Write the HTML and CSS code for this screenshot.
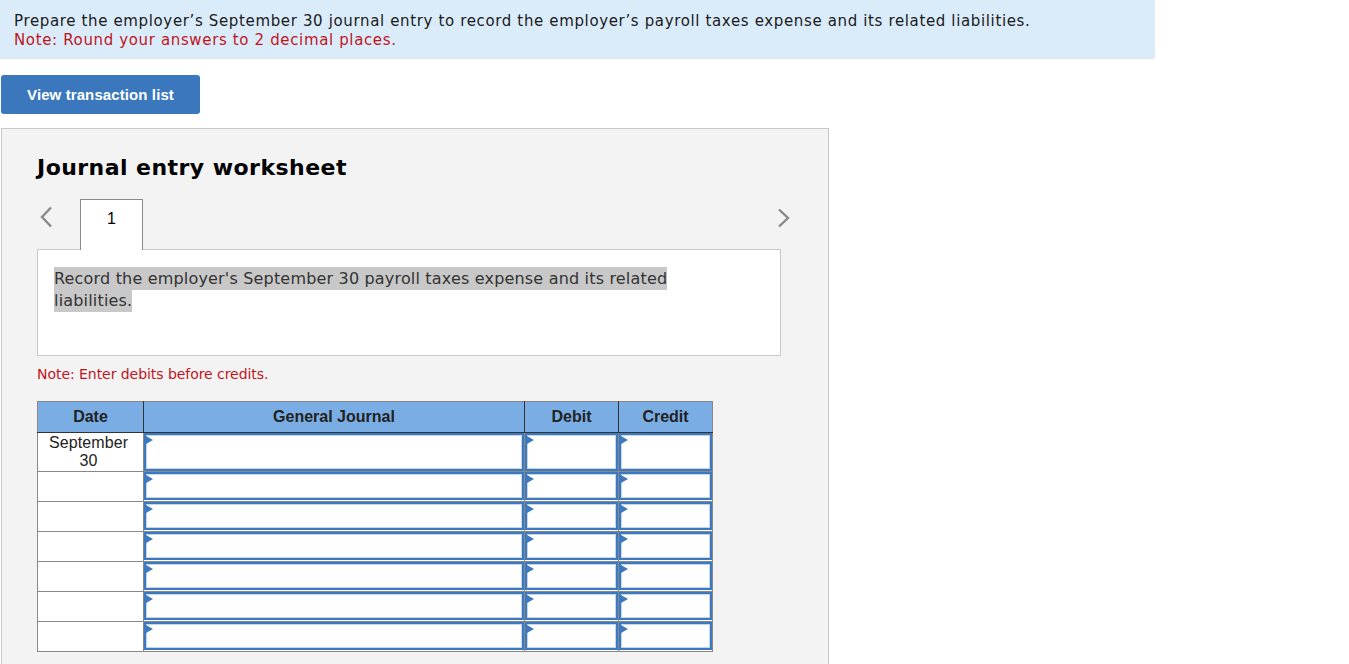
FILE: index.html
```html
<!DOCTYPE html>
<html lang="en">
<head>
<meta charset="utf-8">
<title>Journal entry worksheet</title>
<link rel="stylesheet" href="styles.css">
</head>
<body>
<div class="banner">
  <p class="banner-line">Prepare the employer’s September 30 journal entry to record the employer’s payroll taxes expense and its related liabilities.</p>
  <p class="banner-line note">Note: Round your answers to 2 decimal places.</p>
</div>

<button class="btn">View transaction list</button>

<section class="panel">
  <h2 class="panel-title">Journal entry worksheet</h2>

  <div class="tabs">
    <span class="chev chev-left">
      <svg width="14" height="22" viewBox="0 0 14 22"><polyline points="12,1.5 3,11 12,20.5" fill="none" stroke="#8a8a8a" stroke-width="2.4"/></svg>
    </span>
    <div class="tab">1</div>
    <span class="tab-spacer"></span>
    <span class="chev chev-right">
      <svg width="14" height="20" viewBox="0 0 14 20"><polyline points="2,1.5 11,10 2,18.5" fill="none" stroke="#8a8a8a" stroke-width="2.4"/></svg>
    </span>
  </div>

  <div class="desc">
    <p class="desc-text"><span class="hl">Record the employer's September 30 payroll taxes expense and its related liabilities.</span></p>
  </div>

  <p class="note small-note">Note: Enter debits before credits.</p>

  <table class="journal">
    <colgroup>
      <col class="c-date"><col class="c-gj"><col class="c-num"><col class="c-num">
    </colgroup>
    <thead>
      <tr><th>Date</th><th>General Journal</th><th>Debit</th><th>Credit</th></tr>
    </thead>
    <tbody>
      <tr class="first">
        <td class="date">September<br>30</td>
        <td class="in"><div class="field"><span class="tri"></span></div></td>
        <td class="in"><div class="field"><span class="tri"></span></div></td>
        <td class="in"><div class="field"><span class="tri"></span></div></td>
      </tr>
      <tr>
        <td class="date"></td>
        <td class="in"><div class="field"><span class="tri"></span></div></td>
        <td class="in"><div class="field"><span class="tri"></span></div></td>
        <td class="in"><div class="field"><span class="tri"></span></div></td>
      </tr>
      <tr>
        <td class="date"></td>
        <td class="in"><div class="field"><span class="tri"></span></div></td>
        <td class="in"><div class="field"><span class="tri"></span></div></td>
        <td class="in"><div class="field"><span class="tri"></span></div></td>
      </tr>
      <tr>
        <td class="date"></td>
        <td class="in"><div class="field"><span class="tri"></span></div></td>
        <td class="in"><div class="field"><span class="tri"></span></div></td>
        <td class="in"><div class="field"><span class="tri"></span></div></td>
      </tr>
      <tr>
        <td class="date"></td>
        <td class="in"><div class="field"><span class="tri"></span></div></td>
        <td class="in"><div class="field"><span class="tri"></span></div></td>
        <td class="in"><div class="field"><span class="tri"></span></div></td>
      </tr>
      <tr>
        <td class="date"></td>
        <td class="in"><div class="field"><span class="tri"></span></div></td>
        <td class="in"><div class="field"><span class="tri"></span></div></td>
        <td class="in"><div class="field"><span class="tri"></span></div></td>
      </tr>
      <tr>
        <td class="date"></td>
        <td class="in"><div class="field"><span class="tri"></span></div></td>
        <td class="in"><div class="field"><span class="tri"></span></div></td>
        <td class="in"><div class="field"><span class="tri"></span></div></td>
      </tr>
    </tbody>
  </table>
</section>
</body>
</html>
```

FILE: styles.css
```css
html, body {
  margin: 0;
  padding: 0;
  background: #ffffff;
}
body {
  font-family: "DejaVu Sans", Verdana, sans-serif;
  color: #1a1a1a;
  overflow: hidden;
  height: 664px;
}
.banner {
  width: 1155px;
  height: 59px;
  box-sizing: border-box;
  padding: 12px 14px 0 14px;
  background: #daecfa;
}
.banner-line {
  margin: 0;
  font-size: 15px;
  line-height: 19px;
  letter-spacing: 0.64px;
  white-space: nowrap;
}
.note {
  color: #c0141c;
}
.btn {
  display: block;
  margin: 16px 0 0 1px;
  width: 199px;
  height: 39px;
  border: none;
  border-radius: 3px;
  background: #3a77bd;
  color: #ffffff;
  font-family: "Liberation Sans", Arial, sans-serif;
  font-weight: bold;
  font-size: 15px;
  letter-spacing: 0.1px;
  padding: 0 0 1px 0;
}
.panel {
  margin: 14px 0 0 1px;
  width: 828px;
  height: 600px;
  box-sizing: border-box;
  border: 1px solid #c9c9c9;
  background: #f3f3f3;
  padding: 26px 0 0 35px;
}
.panel-title {
  margin: 0;
  font-size: 22px;
  line-height: 26px;
  font-weight: bold;
  letter-spacing: 0.45px;
  color: #000;
}
.tabs {
  display: flex;
  align-items: flex-start;
  margin-top: 18px;
  width: 754px;
  height: 51px;
  position: relative;
  z-index: 2;
  margin-bottom: -1px;
}
.chev {
  display: block;
  line-height: 0;
}
.chev-left {
  margin: 7px 0 0 2px;
  width: 41px;
}
.chev-right {
  margin-top: 9px;
}
.tab {
  width: 63px;
  height: 51px;
  box-sizing: border-box;
  background: #fff;
  border: 1px solid #8a8a8a;
  border-bottom: none;
  text-align: center;
  font-family: "Liberation Sans", Arial, sans-serif;
  font-size: 16px;
  line-height: 18px;
  padding-top: 10px;
  color: #000;
}
.tab-spacer {
  flex: 1;
}
.desc {
  width: 744px;
  height: 107px;
  box-sizing: border-box;
  background: #fff;
  border: 1px solid #c9c9c9;
  padding: 18px 0 0 16px;
}
.desc-text {
  margin: 0;
  width: 660px;
  font-size: 16px;
  line-height: 22px;
  letter-spacing: 0.18px;
  color: #333;
}
.hl {
  background: #c8c8c8;
  padding: 2px 0;
}
.small-note {
  margin: 10px 0 0 0;
  font-size: 14px;
  line-height: 17px;
  letter-spacing: -0.05px;
}
.journal {
  margin-top: 18px;
  border-collapse: collapse;
  table-layout: fixed;
  width: 676px;
  font-family: "Liberation Sans", Arial, sans-serif;
}
.c-date { width: 106px; }
.c-gj { width: 381px; }
.c-num { width: 94px; }
.journal th {
  height: 30px;
  padding: 0;
  background: #79ade4;
  font-size: 16px;
  font-weight: bold;
  color: #222;
  border: 1px solid #333;
  border-top-color: #888;
}
.journal th:first-child { border-left-color: #888; }
.journal th:last-child { border-right-color: #888; }
.journal td {
  padding: 0;
  border: 1px solid #888;
  background: #fff;
  height: 28px;
}
.journal tr.first td {
  height: 38px;
}
.journal td.date {
  text-align: center;
  vertical-align: top;
  font-size: 16px;
  line-height: 18px;
  letter-spacing: 0.1px;
  color: #222;
  padding: 1px 4px 0 0;
}
.journal tr.first td.date {
  height: 37px;
}
.journal td.in {
  vertical-align: top;
}
.field {
  position: relative;
  box-sizing: border-box;
  height: 28px;
  border: 2px solid #3d79bf;
  box-shadow: inset 0 0 0 1px #c3d6ee;
  background: #fff;
}
.journal tr.first .field {
  height: 38px;
}
.tri {
  position: absolute;
  left: 0;
  top: 1px;
  width: 0;
  height: 0;
  border-top: 4px solid transparent;
  border-bottom: 4px solid transparent;
  border-left: 7px solid #3d79bf;
}
```
